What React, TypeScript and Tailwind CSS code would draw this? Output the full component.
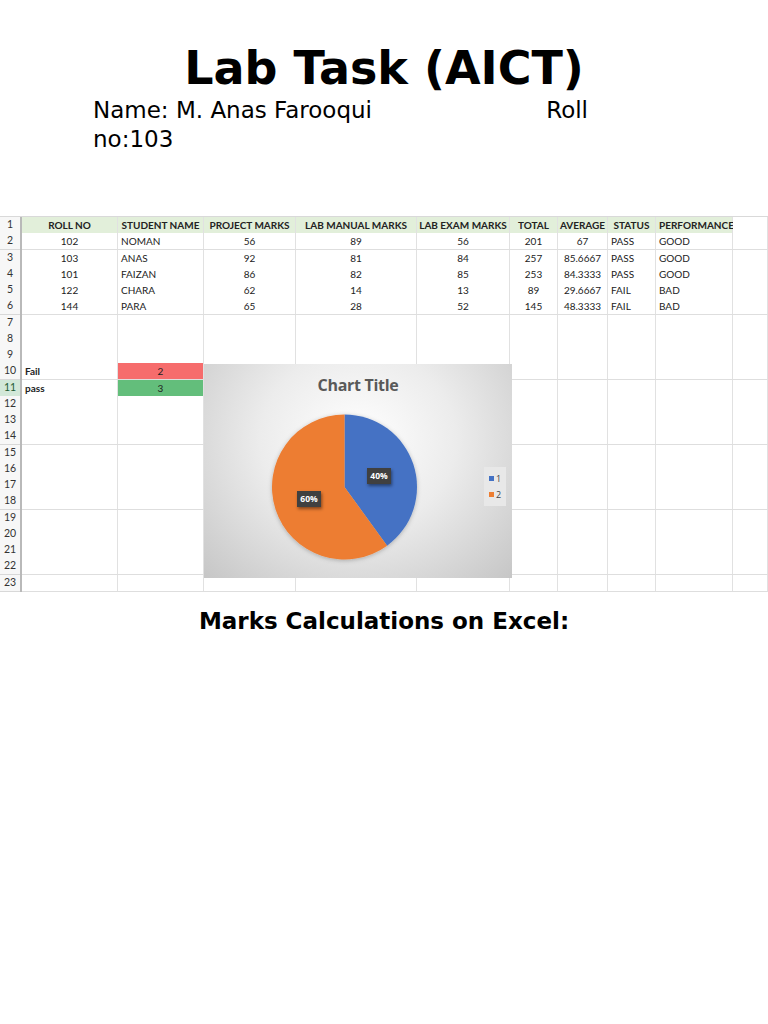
import React from "react";

const cols = "grid-cols-[22px_96px_86px_92px_121px_93px_48px_50px_48px_77px_35px]";

type Cell = { t?: string; a?: "l" | "c"; b?: boolean; bg?: string };

const header: Cell[] = [
  { t: "ROLL NO", a: "c", b: true },
  { t: "STUDENT NAME", a: "c", b: true },
  { t: "PROJECT MARKS", a: "c", b: true },
  { t: "LAB MANUAL MARKS", a: "c", b: true },
  { t: "LAB EXAM MARKS", a: "c", b: true },
  { t: "TOTAL", a: "c", b: true },
  { t: "AVERAGE", a: "c", b: true },
  { t: "STATUS", a: "c", b: true },
  { t: "PERFORMANCE", a: "l", b: true },
];

const data: string[][] = [
  ["102", "NOMAN", "56", "89", "56", "201", "67", "PASS", "GOOD"],
  ["103", "ANAS", "92", "81", "84", "257", "85.6667", "PASS", "GOOD"],
  ["101", "FAIZAN", "86", "82", "85", "253", "84.3333", "PASS", "GOOD"],
  ["122", "CHARA", "62", "14", "13", "89", "29.6667", "FAIL", "BAD"],
  ["144", "PARA", "65", "28", "52", "145", "48.3333", "FAIL", "BAD"],
];

function buildRows(): Cell[][] {
  const rows: Cell[][] = [];
  rows.push(header);
  data.forEach((r) => {
    rows.push(
      r.map((t, i) => ({
        t,
        a: i === 1 || i === 7 || i === 8 ? "l" : "c",
      }))
    );
  });
  for (let i = 7; i <= 23; i++) {
    if (i === 10) rows.push([{ t: "Fail", a: "l", b: true }, { t: "2", a: "c", bg: "red" }]);
    else if (i === 11) rows.push([{ t: "pass", a: "l", b: true }, { t: "3", a: "c", bg: "green" }]);
    else rows.push([]);
  }
  return rows;
}

const ROW = 16.26;

function Sheet() {
  const rows = buildRows();
  return (
    <div className="relative flex w-[768px] flex-col border-t border-[#d9d9d9] font-['Lato',sans-serif] text-[10px] text-[#222]">
      {rows.map((r, ri) => {
        const rowNum = ri + 1;
        const h = Math.round((ri + 1) * ROW) - Math.round(ri * ROW);
        const cells: Cell[] = [];
        for (let c = 0; c < 10; c++) cells.push(r[c] || {});
        return (
          <div key={ri} className="flex flex-col" style={{ height: h }}>
            <div className={`grid ${cols} flex-1`}>
              <div
                className={`flex items-center justify-center border-r-2 border-r-[#b9b9b9] text-[10.5px] ${
                  rowNum === 11 ? "bg-[#d2e8d8] text-[#1e5c32]" : "bg-[#f7f7f7] text-[#333]"
                }`}
              >
                {rowNum}
              </div>
              {cells.map((c, ci) => {
                const isHeader = rowNum === 1 && ci < 9;
                let bg = "bg-white";
                if (isHeader) bg = "bg-[#e2efda]";
                if (c.bg === "red") bg = "bg-[#f66c6c]";
                if (c.bg === "green") bg = "bg-[#63be7b]";
                return (
                  <div
                    key={ci}
                    className={`flex items-center overflow-visible whitespace-nowrap border-r border-[#e1e1e1] px-[3px] leading-none ${bg} ${
                      c.a === "c" ? "justify-center" : "justify-start"
                    } ${c.b ? "font-bold" : ""}`}
                  >
                    {c.t}
                  </div>
                );
              })}
            </div>
            <div className={`grid ${cols} h-px shrink-0`}>
              <div className={`border-r-2 border-r-[#b9b9b9] ${rowNum === 11 ? "bg-[#bcd6c3]" : "bg-[#d8d8d8]"}`} />
              <div className="col-span-10 bg-[#dedede]" />
            </div>
          </div>
        );
      })}
      <Chart />
    </div>
  );
}

function Chart() {
  const cx = 140.5;
  const cy = 123;
  const r = 72.5;
  const ang = (144 * Math.PI) / 180;
  const ex = cx + r * Math.sin(ang);
  const ey = cy - r * Math.cos(ang);
  return (
    <div className="absolute left-[204px] top-[147px] h-[214px] w-[308px] bg-[radial-gradient(ellipse_at_50%_35%,#ffffff_0%,#ececec_45%,#c6c6c6_100%)]">
      <div className="pt-[9px] text-center font-['Open_Sans',sans-serif] text-[16px] font-bold tracking-[-0.3px] text-[#595959]">
        Chart Title
      </div>
      <svg className="absolute left-0 top-0" width="308" height="214">
        <defs>
          <filter id="sh" x="-20%" y="-20%" width="140%" height="140%">
            <feDropShadow dx="0" dy="1" stdDeviation="2" floodColor="#000" floodOpacity="0.25" />
          </filter>
        </defs>
        <g filter="url(#sh)">
          <path d={`M ${cx} ${cy} L ${cx} ${cy - r} A ${r} ${r} 0 0 1 ${ex} ${ey} Z`} fill="#4472c4" />
          <path d={`M ${cx} ${cy} L ${ex} ${ey} A ${r} ${r} 0 1 1 ${cx} ${cy - r} Z`} fill="#ed7d31" />
        </g>
      </svg>
      <div className="absolute left-[163px] top-[104px] flex h-[16px] w-[24px] items-center justify-center bg-[#404040] font-['Open_Sans',sans-serif] text-[8.5px] font-bold text-white shadow-[1px_2px_3px_rgba(0,0,0,0.45)]">
        40%
      </div>
      <div className="absolute left-[93px] top-[127px] flex h-[16px] w-[24px] items-center justify-center bg-[#404040] font-['Open_Sans',sans-serif] text-[8.5px] font-bold text-white shadow-[1px_2px_3px_rgba(0,0,0,0.45)]">
        60%
      </div>
      <div className="absolute left-[280px] top-[103px] flex h-[39px] w-[22px] flex-col items-center justify-center gap-[7px] bg-[#e8e8e8] font-['Open_Sans',sans-serif] text-[9px] text-[#444]">
        <div className="flex items-center gap-[2px]">
          <span className="inline-block h-[5px] w-[5px] bg-[#4472c4]" />
          <span className="leading-none">1</span>
        </div>
        <div className="flex items-center gap-[2px]">
          <span className="inline-block h-[5px] w-[5px] bg-[#ed7d31]" />
          <span className="leading-none">2</span>
        </div>
      </div>
    </div>
  );
}

export default function App() {
  return (
    <div className="min-h-[1024px] w-[768px] bg-white text-black font-['DejaVu_Sans',sans-serif]">
      <div className="pt-[40px] text-center text-[46px] font-bold leading-[56px]">Lab Task (AICT)</div>
      <div className="ml-[93px] w-[495px] text-[23px] leading-[29px]">
        <div className="flex justify-between">
          <span>Name: M. Anas Farooqui</span>
          <span>Roll</span>
        </div>
        <div>no:103</div>
      </div>
      <div className="mt-[62px]">
        <Sheet />
      </div>
      <div className="mt-[13px] text-center text-[23px] font-bold">Marks Calculations on Excel:</div>
    </div>
  );
}
